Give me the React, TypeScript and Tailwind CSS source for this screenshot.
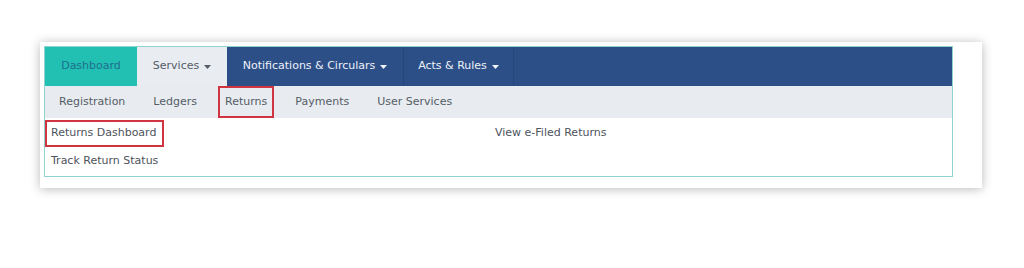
const topItems = [
  { label: 'Notifications & Circulars', width: 'w-[177px]' },
  { label: 'Acts & Rules', width: 'w-[110px]' },
];

const subItems = ['Registration', 'Ledgers', 'Returns', 'Payments', 'User Services'];

function Caret({ className }: { className: string }) {
  return (
    <svg width="7" height="4" viewBox="0 0 7 4" className={className}>
      <path d="M0 0h7L3.5 4z" fill="currentColor" />
    </svg>
  );
}

export default function App() {
  return (
    <div className="min-h-[268px] bg-white pl-[40px] pt-[42px] font-['DejaVu_Sans',Verdana,sans-serif] text-[11px]">
      <div className="w-[942px] bg-white pl-[4px] pt-[4px] pb-[11px] shadow-[0_1px_10px_rgba(0,0,0,0.28)]">
        <div className="w-[909px] border border-[#8fd3ce]">
          {/* top nav */}
          <div className="flex h-[39px] bg-[#2c4f88]">
            <div className="flex w-[92px] items-center justify-center bg-[#22c0b3] text-[#1f6f8e]">
              Dashboard
            </div>
            <div className="flex w-[90px] items-center justify-center gap-[5px] bg-[#e9edf2] text-[#555c66]">
              Services
              <Caret className="text-[#555c66]" />
            </div>
            {topItems.map((item) => (
              <div
                key={item.label}
                className={`flex ${item.width} items-center justify-center gap-[5px] border-r border-[#27467a] text-[#eef2f8]`}
              >
                {item.label}
                <Caret className="text-[#eef2f8]" />
              </div>
            ))}
          </div>

          {/* sub nav */}
          <div className="flex h-[32px] items-center bg-[#e8ecf0] text-[#555c66]">
            {subItems.map((s) => (
              <div key={s} className="relative flex h-full items-center px-[14px]">
                {s}
                {s === 'Returns' && (
                  <span className="absolute inset-y-0 left-[7px] right-[7px] border-2 border-[#cf3440]" />
                )}
              </div>
            ))}
          </div>

          {/* dropdown content */}
          <div className="grid h-[58px] grid-cols-[444px_1fr] bg-white pt-[2px] text-[#4d535c]">
            <div className="flex flex-col">
              <div className="flex h-[27px] w-[119px] items-center border-2 border-[#cf3440] pl-[4px]">
                Returns Dashboard
              </div>
              <div className="flex h-[29px] items-center pl-[6px]">Track Return Status</div>
            </div>
            <div className="flex h-[27px] items-center pl-[6px]">View e-Filed Returns</div>
          </div>
        </div>
      </div>
    </div>
  );
}
